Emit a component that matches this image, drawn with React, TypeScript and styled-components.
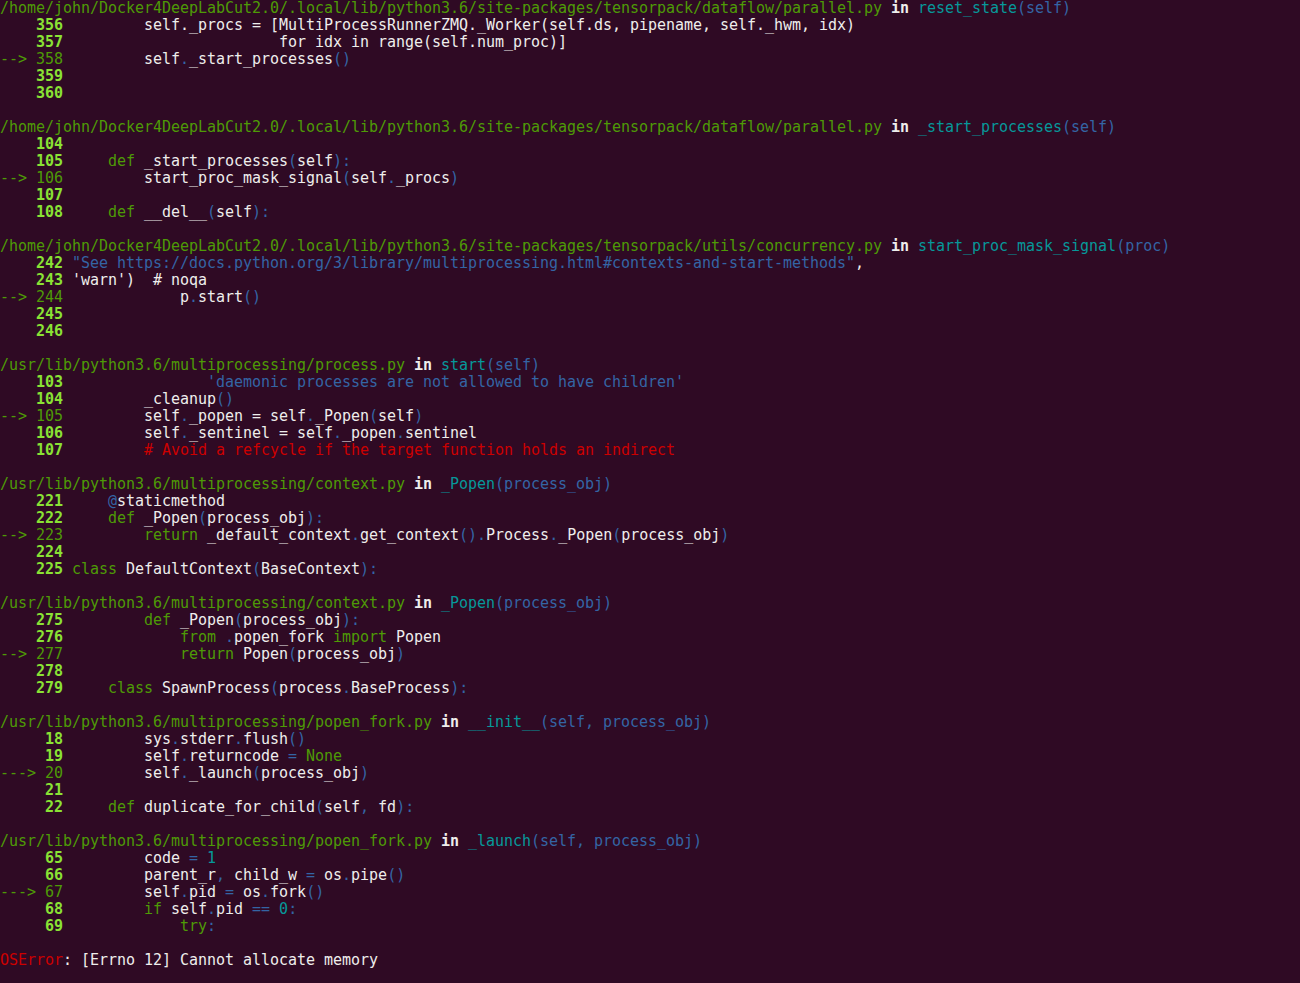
import React from "react";
import styled, { createGlobalStyle } from "styled-components";

const Global = createGlobalStyle`
  html, body { margin: 0; padding: 0; background: #2f0a24; }
  #root { min-height: 983px; }
`;

const Terminal = styled.div`
  width: 1300px;
  height: 983px;
  overflow: hidden;
  background: #2f0a24;
  color: #eeeeec;
  font-family: "DejaVu Sans Mono", "Liberation Mono", monospace;
  font-size: 15px;
  letter-spacing: -0.03px;
  box-sizing: border-box;
`;

const Line = styled.div`
  height: 17px;
  line-height: 17px;
  white-space: pre;
`;

type Code = "w" | "W" | "b" | "g" | "t" | "r" | "L" | "a";

const palette: Record<Code, { color: string; bold: boolean }> = {
  w: { color: "#eeeeec", bold: false },
  W: { color: "#eeeeec", bold: true },
  b: { color: "#3465a4", bold: false },
  g: { color: "#4e9a06", bold: false },
  t: { color: "#06989a", bold: false },
  r: { color: "#cc0000", bold: false },
  L: { color: "#8ae234", bold: true },
  a: { color: "#4e9a06", bold: false },
};

const Seg = styled.span<{ $c: Code }>`
  color: ${(p) => palette[p.$c].color};
  font-weight: ${(p) => (palette[p.$c].bold ? 700 : 400)};
`;

const P1 = "/home/john/Docker4DeepLabCut2.0/.local/lib/python3.6/site-packages/tensorpack/";

const lines: string[] = [
  `g:${P1}dataflow/parallel.py|W: in |t:reset_state|b:(self)`,
  "L:    356|w:         self._procs = [MultiProcessRunnerZMQ._Worker(self.ds, pipename, self._hwm, idx)",
  "L:    357|w:                        for idx in range(self.num_proc)]",
  "a:--> 358|w:         self|b:.|w:_start_processes|b:()",
  "L:    359",
  "L:    360",
  "",
  `g:${P1}dataflow/parallel.py|W: in |t:_start_processes|b:(self)`,
  "L:    104",
  "L:    105|w:     |g:def|w: _start_processes|b:(|w:self|b:):",
  "a:--> 106|w:         start_proc_mask_signal|b:(|w:self|b:.|w:_procs|b:)",
  "L:    107",
  "L:    108|w:     |g:def|w: __del__|b:(|w:self|b:):",
  "",
  `g:${P1}utils/concurrency.py|W: in |t:start_proc_mask_signal|b:(proc)`,
  'L:    242|b: "See https://docs.python.org/3/library/multiprocessing.html#contexts-and-start-methods"|w:,',
  "L:    243|w: 'warn')  # noqa",
  "a:--> 244|w:             p|b:.|w:start|b:()",
  "L:    245",
  "L:    246",
  "",
  "g:/usr/lib/python3.6/multiprocessing/process.py|W: in |t:start|b:(self)",
  "L:    103|b:                'daemonic processes are not allowed to have children'",
  "L:    104|w:         _cleanup|b:()",
  "a:--> 105|w:         self|b:.|w:_popen = self|b:.|w:_Popen|b:(|w:self|b:)",
  "L:    106|w:         self|b:.|w:_sentinel = self|b:.|w:_popen|b:.|w:sentinel",
  "L:    107|w:         |r:# Avoid a refcycle if the target function holds an indirect",
  "",
  "g:/usr/lib/python3.6/multiprocessing/context.py|W: in |t:_Popen|b:(process_obj)",
  "L:    221|w:     |b:@|w:staticmethod",
  "L:    222|w:     |g:def|w: _Popen|b:(|w:process_obj|b:):",
  "a:--> 223|w:         |g:return|w: _default_context|b:.|w:get_context|b:().|w:Process|b:.|w:_Popen|b:(|w:process_obj|b:)",
  "L:    224",
  "L:    225|w: |g:class|w: DefaultContext|b:(|w:BaseContext|b:):",
  "",
  "g:/usr/lib/python3.6/multiprocessing/context.py|W: in |t:_Popen|b:(process_obj)",
  "L:    275|w:         |g:def|w: _Popen|b:(|w:process_obj|b:):",
  "L:    276|w:             |g:from|b: .|w:popen_fork |g:import|w: Popen",
  "a:--> 277|w:             |g:return|w: Popen|b:(|w:process_obj|b:)",
  "L:    278",
  "L:    279|w:     |g:class|w: SpawnProcess|b:(|w:process|b:.|w:BaseProcess|b:):",
  "",
  "g:/usr/lib/python3.6/multiprocessing/popen_fork.py|W: in |t:__init__|b:(self, process_obj)",
  "L:     18|w:         sys|b:.|w:stderr|b:.|w:flush|b:()",
  "L:     19|w:         self|b:.|w:returncode |b:=|g: None",
  "a:---> 20|w:         self|b:.|w:_launch|b:(|w:process_obj|b:)",
  "L:     21",
  "L:     22|w:     |g:def|w: duplicate_for_child|b:(|w:self|b:,|w: fd|b:):",
  "",
  "g:/usr/lib/python3.6/multiprocessing/popen_fork.py|W: in |t:_launch|b:(self, process_obj)",
  "L:     65|w:         code |b:=|t: 1",
  "L:     66|w:         parent_r|b:,|w: child_w |b:=|w: os|b:.|w:pipe|b:()",
  "a:---> 67|w:         self|b:.|w:pid |b:=|w: os|b:.|w:fork|b:()",
  "L:     68|w:         |g:if|w: self|b:.|w:pid |b:==|t: 0|b::",
  "L:     69|w:             |g:try|b::",
  "",
  "r:OSError|w:: [Errno 12] Cannot allocate memory",
];

function parse(line: string): { c: Code; text: string }[] {
  if (!line) return [];
  return line.split("|").map((s) => ({ c: s[0] as Code, text: s.slice(2) }));
}

export default function App() {
  return (
    <>
      <Global />
      <Terminal>
        {lines.map((l, i) => (
          <Line key={i}>
            {parse(l).map((s, j) => (
              <Seg key={j} $c={s.c}>
                {s.text}
              </Seg>
            ))}
          </Line>
        ))}
      </Terminal>
    </>
  );
}
